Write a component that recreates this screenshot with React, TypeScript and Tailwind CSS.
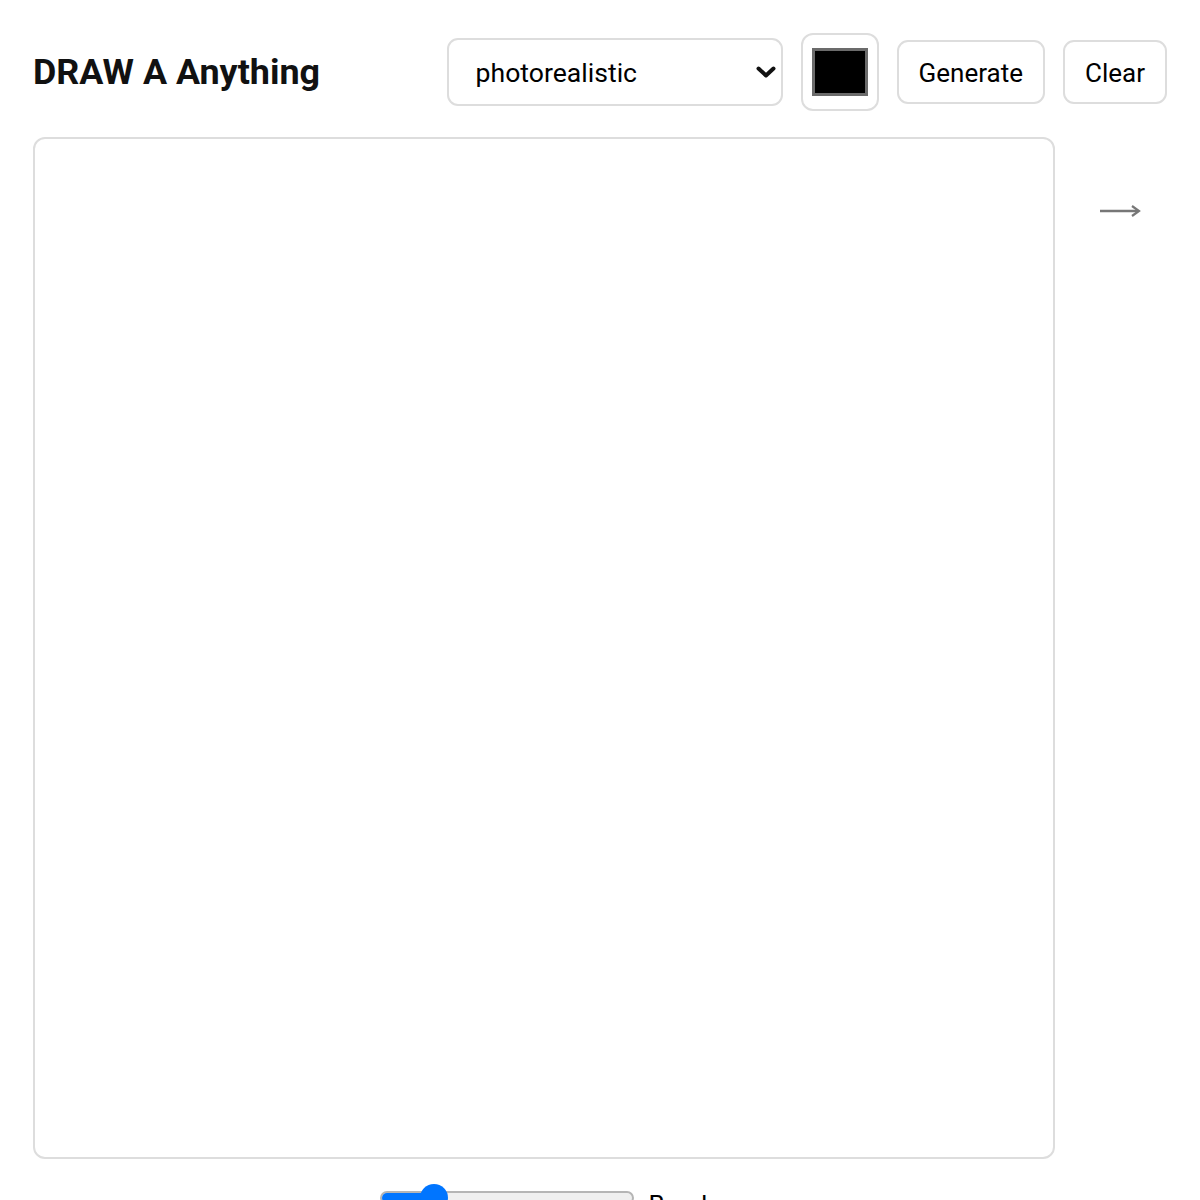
import { useState } from "react";

const STYLES = ["photorealistic", "cartoon", "sketch", "watercolor"];

function Chevron() {
  return (
    <svg width="20" height="12" viewBox="0 0 20 12" className="pointer-events-none absolute right-[7px] top-1/2 -translate-y-1/2">
      <path d="M2.5 2.5 L10 9.5 L17.5 2.5" fill="none" stroke="#111" strokeWidth="4" strokeLinecap="round" strokeLinejoin="round" />
    </svg>
  );
}

function Arrow() {
  return (
    <svg width="42" height="14" viewBox="0 0 42 14">
      <path d="M1 7 H39" stroke="#777" strokeWidth="2.4" />
      <path d="M33 2 L40 7 L33 12" fill="none" stroke="#777" strokeWidth="2.2" />
    </svg>
  );
}

export default function App() {
  const [style, setStyle] = useState("photorealistic");

  return (
    <div className="min-h-[1200px] bg-white px-[33px] pt-[33px] font-['Roboto',sans-serif] text-black">
      <div className="flex items-center justify-between">
        <h1 className="pt-[2px] text-[35.9px] font-bold leading-none text-[#111]">DRAW A Anything</h1>
        <div className="flex items-center gap-[18px]">
          <div className="relative">
            <select
              value={style}
              onChange={(e) => setStyle(e.target.value)}
              className="h-[68px] w-[336px] appearance-none rounded-[11px] border-2 border-[#ddd] bg-white pl-[27px] pt-[2px] text-[26.6px] text-black outline-none"
            >
              {STYLES.map((s) => (
                <option key={s} value={s}>
                  {s}
                </option>
              ))}
            </select>
            <Chevron />
          </div>
          <div className="flex h-[78px] w-[78px] items-center justify-center rounded-[12px] border-2 border-[#ddd] bg-white">
            <div className="h-[48px] w-[56px] border-[3px] border-[#6b6b6b] bg-black" />
          </div>
          <button className="h-[64px] rounded-[11px] border-2 border-[#ddd] bg-white px-[20px] pt-[2px] text-[26px] text-black">
            Generate
          </button>
          <button className="h-[64px] rounded-[11px] border-2 border-[#ddd] bg-white px-[20px] pt-[2px] text-[26px] text-black">
            Clear
          </button>
        </div>
      </div>

      <div className="mt-[26px] flex">
        <div className="flex w-[1022px] flex-col items-center">
          <div className="h-[1022px] w-[1022px] rounded-[12px] border-2 border-[#ddd] bg-white" />
          <div className="mt-[25px] flex items-start gap-[14px] pl-[8px]">
            <div className="relative h-[28px] w-[254px]">
              <div className="absolute left-0 right-0 top-[7px] h-[14px] overflow-hidden rounded-[7px] border-2 border-[#b5b5b5] bg-[#efefef]">
                <div className="h-full w-[54px] bg-[#0075ff]" />
              </div>
              <div className="absolute left-[40px] top-0 h-[28px] w-[28px] rounded-full bg-[#0075ff]" />
            </div>
            <span className="mt-[6px] text-[26px] leading-[30px]">Brush</span>
          </div>
        </div>
        <div className="flex flex-1 justify-end pr-[26px] pt-[67px]">
          <div className="h-[14px]">
            <Arrow />
          </div>
        </div>
      </div>
    </div>
  );
}
